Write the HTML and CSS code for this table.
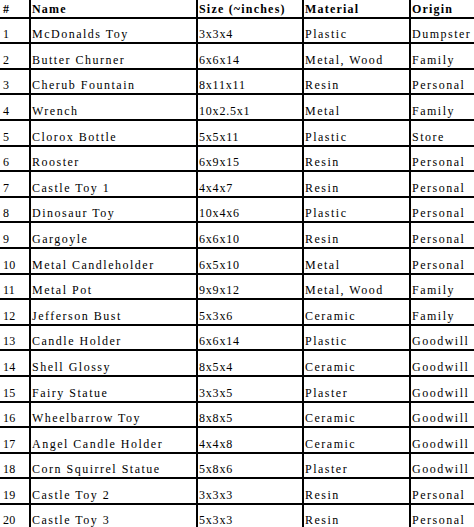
FILE: index.html
```html
<!DOCTYPE html>
<html>
<head>
<meta charset="utf-8">
<link rel="stylesheet" href="styles.css">
</head>
<body>
<table class="items">
<colgroup>
<col class="c-num"><col class="c-name"><col class="c-size"><col class="c-mat"><col class="c-orig">
</colgroup>
<thead>
<tr><th class="num">#</th><th>Name</th><th>Size (~inches)</th><th>Material</th><th>Origin</th></tr>
</thead>
<tbody>
<tr><td class="num">1</td><td>McDonalds Toy</td><td class="size">3x3x4</td><td>Plastic</td><td>Dumpster</td></tr>
<tr><td class="num">2</td><td>Butter Churner</td><td class="size">6x6x14</td><td>Metal, Wood</td><td>Family</td></tr>
<tr><td class="num">3</td><td>Cherub Fountain</td><td class="size">8x11x11</td><td>Resin</td><td>Personal</td></tr>
<tr><td class="num">4</td><td>Wrench</td><td class="size">10x2.5x1</td><td>Metal</td><td>Family</td></tr>
<tr><td class="num">5</td><td>Clorox Bottle</td><td class="size">5x5x11</td><td>Plastic</td><td>Store</td></tr>
<tr><td class="num">6</td><td>Rooster</td><td class="size">6x9x15</td><td>Resin</td><td>Personal</td></tr>
<tr><td class="num">7</td><td>Castle Toy 1</td><td class="size">4x4x7</td><td>Resin</td><td>Personal</td></tr>
<tr><td class="num">8</td><td>Dinosaur Toy</td><td class="size">10x4x6</td><td>Plastic</td><td>Personal</td></tr>
<tr><td class="num">9</td><td>Gargoyle</td><td class="size">6x6x10</td><td>Resin</td><td>Personal</td></tr>
<tr><td class="num">10</td><td>Metal Candleholder</td><td class="size">6x5x10</td><td>Metal</td><td>Personal</td></tr>
<tr><td class="num">11</td><td>Metal Pot</td><td class="size">9x9x12</td><td>Metal, Wood</td><td>Family</td></tr>
<tr><td class="num">12</td><td>Jefferson Bust</td><td class="size">5x3x6</td><td>Ceramic</td><td>Family</td></tr>
<tr><td class="num">13</td><td>Candle Holder</td><td class="size">6x6x14</td><td>Plastic</td><td>Goodwill</td></tr>
<tr><td class="num">14</td><td>Shell Glossy</td><td class="size">8x5x4</td><td>Ceramic</td><td>Goodwill</td></tr>
<tr><td class="num">15</td><td>Fairy Statue</td><td class="size">3x3x5</td><td>Plaster</td><td>Goodwill</td></tr>
<tr><td class="num">16</td><td>Wheelbarrow Toy</td><td class="size">8x8x5</td><td>Ceramic</td><td>Goodwill</td></tr>
<tr><td class="num">17</td><td>Angel Candle Holder</td><td class="size">4x4x8</td><td>Ceramic</td><td>Goodwill</td></tr>
<tr><td class="num">18</td><td>Corn Squirrel Statue</td><td class="size">5x8x6</td><td>Plaster</td><td>Goodwill</td></tr>
<tr><td class="num">19</td><td>Castle Toy 2</td><td class="size">3x3x3</td><td>Resin</td><td>Personal</td></tr>
<tr><td class="num">20</td><td>Castle Toy 3</td><td class="size">5x3x3</td><td>Resin</td><td>Personal</td></tr>
</tbody>
</table>
</body>
</html>
```
FILE: styles.css
```css
html, body {
  margin: 0;
  padding: 0;
  background: #fff;
  overflow: hidden;
}
body {
  width: 474px;
  height: 527px;
}
.items {
  border-collapse: collapse;
  table-layout: fixed;
  width: 529px;
  margin: -9px 0 0 0;
  font-family: "Liberation Serif", "Times New Roman", serif;
  font-size: 12px;
  color: #000;
}
.c-num { width: 29px; }
.c-name { width: 167px; }
.c-size { width: 106px; }
.c-mat { width: 107px; }
.c-orig { width: 120px; }
.items th, .items td {
  border: 2px solid #000;
  height: 22.6px;
  padding: 0 0 1px 1px;
  vertical-align: bottom;
  text-align: left;
  white-space: nowrap;
  overflow: hidden;
  letter-spacing: 1.5px;
  line-height: 14px;
}
.items th {
  font-weight: bold;
  letter-spacing: 1.2px;
}
.items .num {
  letter-spacing: 0.3px;
  border-left-color: transparent;
}
.items .size {
  letter-spacing: 0.8px;
}
```
